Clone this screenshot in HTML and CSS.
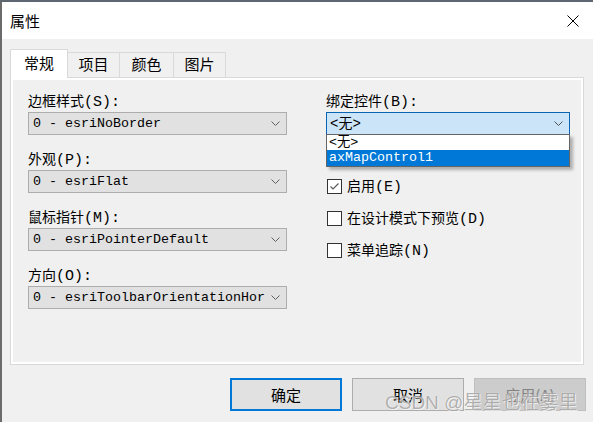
FILE: index.html
```html
<!DOCTYPE html>
<html lang="zh-CN">
<head>
<meta charset="utf-8">
<title>属性</title>
<link rel="stylesheet" href="styles.css">
</head>
<body>
<div class="window">
  <div class="titlebar">
    <span class="title">属性</span>
    <svg class="close" viewBox="0 0 12 12" width="12" height="12"><path d="M0.5 0.5 L11.5 11.5 M11.5 0.5 L0.5 11.5" stroke="#000" stroke-width="1" fill="none"/></svg>
  </div>
  <div class="content">
    <div class="tabs">
      <div class="tab active">常规</div>
      <div class="tab t2">项目</div>
      <div class="tab t3">颜色</div>
      <div class="tab t4">图片</div>
    </div>
    <div class="panel">
      <div class="page">
        <div class="col left">
          <div class="field">
            <div class="label">边框样式<span class="k">(S):</span></div>
            <div class="combo"><span class="val">0 - esriNoBorder</span><svg class="chev" viewBox="0 0 9 5" width="9" height="5"><polyline points="0.5,0.5 4.5,4.5 8.5,0.5" fill="none" stroke="#606060"/></svg></div>
          </div>
          <div class="field">
            <div class="label">外观<span class="k">(P):</span></div>
            <div class="combo"><span class="val">0 - esriFlat</span><svg class="chev" viewBox="0 0 9 5" width="9" height="5"><polyline points="0.5,0.5 4.5,4.5 8.5,0.5" fill="none" stroke="#606060"/></svg></div>
          </div>
          <div class="field">
            <div class="label">鼠标指针<span class="k">(M):</span></div>
            <div class="combo"><span class="val">0 - esriPointerDefault</span><svg class="chev" viewBox="0 0 9 5" width="9" height="5"><polyline points="0.5,0.5 4.5,4.5 8.5,0.5" fill="none" stroke="#606060"/></svg></div>
          </div>
          <div class="field">
            <div class="label">方向<span class="k">(O):</span></div>
            <div class="combo"><span class="val">0 - esriToolbarOrientationHor</span><svg class="chev" viewBox="0 0 9 5" width="9" height="5"><polyline points="0.5,0.5 4.5,4.5 8.5,0.5" fill="none" stroke="#606060"/></svg></div>
          </div>
        </div>
        <div class="col right">
          <div class="field">
            <div class="label">绑定控件<span class="k">(B):</span></div>
            <div class="combo focus"><span class="val">&lt;无&gt;</span><svg class="chev" viewBox="0 0 9 5" width="9" height="5"><polyline points="0.5,0.5 4.5,4.5 8.5,0.5" fill="none" stroke="#505050"/></svg></div>
          </div>
          <div class="checks">
            <div class="check"><span class="box"><svg viewBox="0 0 13 13" width="13" height="13"><polyline points="2.5,6.5 5,9 10.5,3.5" fill="none" stroke="#5a5a5a" stroke-width="1.2"/></svg></span><span class="ctext">启用<span class="k">(E)</span></span></div>
            <div class="check"><span class="box"></span><span class="ctext">在设计模式下预览<span class="k">(D)</span></span></div>
            <div class="check"><span class="box"></span><span class="ctext">菜单追踪<span class="k">(N)</span></span></div>
          </div>
          <div class="dropdown">
            <div class="item">&lt;无&gt;</div>
            <div class="item sel">axMapControl1</div>
          </div>
        </div>
      </div>
    </div>
    <div class="buttons">
      <div class="btn default">确定</div>
      <div class="btn">取消</div>
      <div class="btn disabled">应用(A)</div>
    </div>
  </div>
  <div class="watermark">CSDN @星星也在雾里</div>
</div>
</body>
</html>
```
FILE: styles.css
```css
* { box-sizing: border-box; }
html, body { margin: 0; padding: 0; }
body {
  width: 593px;
  height: 422px;
  overflow: hidden;
  background: #f0f0f0;
  font-family: "Noto Sans CJK SC", sans-serif;
  color: #000;
}
.window {
  position: relative;
  width: 593px;
  height: 422px;
  border-left: 2px solid #6b6b6b;
  border-top: 2px solid #5e6672;
  background: #f0f0f0;
}
.titlebar {
  height: 37px;
  background: #fff;
  display: flex;
  align-items: center;
  justify-content: space-between;
  padding: 0 14px 0 8px;
}
.title { font-size: 15px; line-height: 20px; }
.close { display: block; }
.content { padding: 10px 0 0 8px; }
.tabs {
  display: flex;
  align-items: flex-end;
  height: 28px;
}
.tab {
  height: 25px;
  border-top: 1px solid #d9d9d9;
  border-right: 1px solid #d9d9d9;
  font-size: 15px;
  line-height: 22px;
  text-align: center;
  background: #f0f0f0;
}
.tab.active {
  width: 58px;
  height: 29px;
  margin-bottom: -1px;
  border-left: 1px solid #d9d9d9;
  background: #fff;
  position: relative;
  z-index: 1;
  line-height: 25px;
}
.t2 { width: 52px; }
.t3 { width: 54px; }
.t4 { width: 52px; }
.panel {
  width: 574px;
  height: 288px;
  border: 1px solid #d9d9d9;
  background: #fff;
  padding: 2px;
}
.page {
  height: 100%;
  background: #f0f0f0;
  display: flex;
  align-items: flex-start;
  padding-top: 12px;
}
.col { display: flex; flex-direction: column; }
.col.left { margin-left: 15px; width: 259px; }
.col.right { margin-left: 39px; width: 244px; position: relative; }
.field { display: flex; flex-direction: column; }
.col.left .field + .field { margin-top: 15px; }
.label {
  height: 16px;
  font-size: 14px;
  line-height: 16px;
  margin-bottom: 4px;
  white-space: nowrap;
}
.k {
  font-family: "Liberation Mono", monospace;
  font-size: 15px;
}
.combo {
  height: 23px;
  border: 1px solid #adadad;
  background: #e1e1e1;
  display: flex;
  align-items: center;
  justify-content: space-between;
  padding: 0 6px 0 4px;
}
.combo.focus {
  border-color: #0a64b4;
  background: #cce4f7;
  padding-left: 3px;
}
.val {
  font-family: "Liberation Mono", "Noto Sans CJK SC", monospace;
  font-size: 13.33px;
  line-height: 16px;
  white-space: nowrap;
}
.combo.focus .val { font-size: 14px; }
.chev { display: block; }
.checks {
  margin-top: 41px;
  display: flex;
  flex-direction: column;
  gap: 12px;
}
.check {
  height: 20px;
  display: flex;
  align-items: center;
  margin-left: 1px;
}
.box {
  width: 15px;
  height: 15px;
  border: 1px solid #333;
  background: #fff;
  display: flex;
  align-items: center;
  justify-content: center;
  margin-right: 5px;
}
.box svg { display: block; }
.ctext {
  font-size: 14px;
  line-height: 16px;
  white-space: nowrap;
}
.dropdown {
  position: absolute;
  top: 42px;
  left: 0;
  width: 244px;
  height: 33px;
  border: 1px solid #646464;
  background: #fff;
  box-shadow: 3px 3px 3px rgba(0, 0, 0, 0.28);
  padding: 0;
  z-index: 2;
}
.item {
  height: 15px;
  line-height: 15px;
  padding-left: 2px;
  font-family: "Liberation Mono", "Noto Sans CJK SC", monospace;
  font-size: 13.33px;
  white-space: nowrap;
}
.item.sel { background: #0078d7; color: #fff; height: 16px; line-height: 16px; }
.buttons {
  margin-top: 13px;
  display: flex;
  justify-content: flex-end;
  gap: 10px;
  padding-right: 7px;
}
.btn {
  width: 112px;
  height: 33px;
  border: 1px solid #adadad;
  background: #e1e1e1;
  font-size: 15px;
  line-height: 31px;
  text-align: center;
}
.btn.default {
  border: 2px solid #0078d7;
  line-height: 29px;
}
.btn.disabled {
  background: #cccccc;
  border-color: #bfbfbf;
  color: #838383;
}
.watermark {
  position: absolute;
  left: 383px;
  top: 389px;
  font-family: "Liberation Sans", "Noto Sans CJK SC", sans-serif;
  font-size: 19px;
  line-height: 24px;
  color: rgba(110, 110, 110, 0.55);
  text-shadow: 0 0 1px rgba(255, 255, 255, 0.9), 1px 1px 0 rgba(255, 255, 255, 0.6);
  white-space: nowrap;
  z-index: 5;
}
```
